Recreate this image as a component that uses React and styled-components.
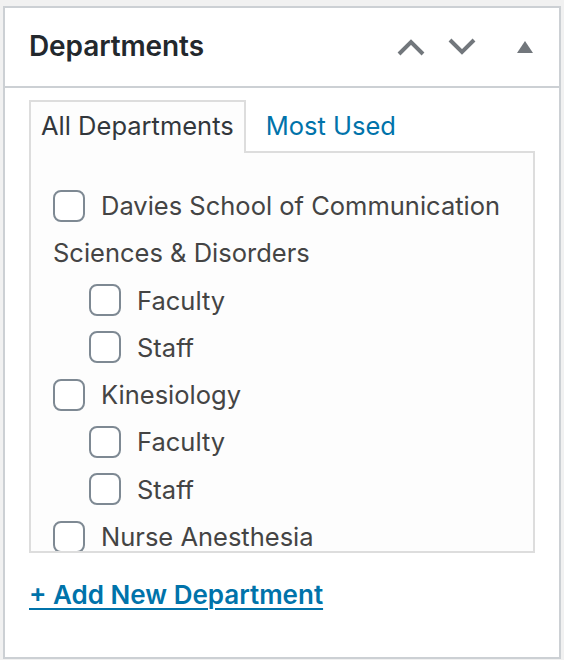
import React from "react";
import styled, { createGlobalStyle } from "styled-components";

const Global = createGlobalStyle`
  html, body { margin: 0; padding: 0; }
  body {
    background: #f1f1f1;
    padding: 6px 3px 0 3px;
    font-family: Inter, "Noto Sans", sans-serif;
  }
`;

const Box = styled.div`
  background: #fff;
  border: 2px solid #ccd0d4;
  height: 653px;
  box-sizing: border-box;
`;

const Header = styled.div`
  display: flex;
  align-items: center;
  height: 80px;
  box-sizing: border-box;
  border-bottom: 2px solid #ccd0d4;
  padding: 0 4px 2px 24px;
`;

const Title = styled.h2`
  flex: 1;
  margin: 0;
  font-size: 28px;
  font-weight: 600;
  color: #23282d;
  letter-spacing: -0.1px;
`;

const Handle = styled.button`
  display: flex;
  align-items: center;
  justify-content: center;
  width: ${(p) => p.w}px;
  height: 60px;
  padding: 2px 0 0 0;
  border: 0;
  background: none;
  color: #72777c;
`;

const Inside = styled.div`
  padding: 12px 24px 0 24px;
`;

const Tabs = styled.ul`
  display: flex;
  align-items: flex-end;
  gap: 8px;
  list-style: none;
  margin: 0;
  padding: 0;
`;

const Tab = styled.li`
  position: relative;
  z-index: 1;
  margin-bottom: -2px;
  padding: 0 10px;
  height: 53px;
  line-height: 47px;
  font-size: 25.5px;
  box-sizing: border-box;
  border: 2px solid ${(p) => (p.active ? "#ddd" : "transparent")};
  border-bottom: 0;
  background: ${(p) => (p.active ? "#fdfdfd" : "transparent")};
  color: ${(p) => (p.active ? "#32373c" : "#0073aa")};
`;

const Panel = styled.div`
  height: 402px;
  box-sizing: border-box;
  border: 2px solid #ddd;
  background: #fdfdfd;
  overflow: hidden;
  padding: 29px 20px 0 22px;
`;

const List = styled.ul`
  list-style: none;
  margin: 0;
  padding: 0 0 0 ${(p) => (p.nested ? 36 : 0)}px;
`;

const Item = styled.li`
  margin: 0;
  line-height: 47.3px;
  font-size: 25.5px;
  color: #444;
`;

const Check = styled.span`
  display: inline-block;
  width: 32px;
  height: 32px;
  box-sizing: border-box;
  border: 2px solid #7e8993;
  border-radius: 8px;
  background: #fff;
  vertical-align: middle;
  margin: -5px 16px 0 0;
`;

const AddLink = styled.a`
  display: inline-block;
  margin-top: 26px;
  font-size: 26px;
  font-weight: 600;
  color: #0073aa;
  text-decoration: underline;
  text-decoration-thickness: 2px;
  text-underline-offset: 4px;
`;

const tree = [
  { name: "Davies School of Communication Sciences & Disorders", children: ["Faculty", "Staff"] },
  { name: "Kinesiology", children: ["Faculty", "Staff"] },
  { name: "Nurse Anesthesia" },
];

function Node({ name, children }) {
  return (
    <Item>
      <label><Check />{name}</label>
      {children && (
        <List nested>
          {children.map((c) => (
            <Node key={c} name={c} />
          ))}
        </List>
      )}
    </Item>
  );
}

export default function App() {
  return (
    <>
      <Global />
      <Box>
        <Header>
          <Title>Departments</Title>
          <Handle w={37} aria-label="Move up">
            <svg width="28" height="18" viewBox="0 0 28 18">
              <path d="M2 16 L14 4 L26 16" fill="none" stroke="currentColor" strokeWidth="4" />
            </svg>
          </Handle>
          <Handle w={66} aria-label="Move down">
            <svg width="28" height="18" viewBox="0 0 28 18">
              <path d="M2 2 L14 14 L26 2" fill="none" stroke="currentColor" strokeWidth="4" />
            </svg>
          </Handle>
          <Handle w={60} aria-label="Toggle panel">
            <svg width="16" height="12" viewBox="0 0 16 12">
              <path d="M8 0 L16 12 L0 12 Z" fill="currentColor" />
            </svg>
          </Handle>
        </Header>
        <Inside>
          <Tabs>
            <Tab active>All Departments</Tab>
            <Tab>Most Used</Tab>
          </Tabs>
          <Panel>
            <List>
              {tree.map((n) => (
                <Node key={n.name} name={n.name} children={n.children} />
              ))}
            </List>
          </Panel>
          <AddLink href="#">+ Add New Department</AddLink>
        </Inside>
      </Box>
    </>
  );
}
